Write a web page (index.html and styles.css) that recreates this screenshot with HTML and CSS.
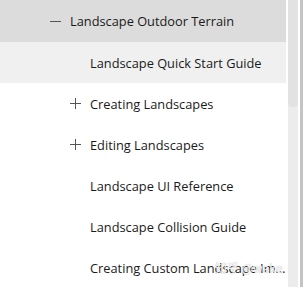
FILE: index.html
```html
<!DOCTYPE html>
<html>
<head>
<meta charset="utf-8">
<link rel="stylesheet" href="styles.css">
</head>
<body>
<div class="frame">
  <ul class="nav">
    <li class="row active lvl1"><span class="icon minus"></span><span class="label">Landscape Outdoor Terrain</span></li>
    <li class="row current lvl2"><span class="label">Landscape Quick Start Guide</span></li>
    <li class="row lvl2"><span class="icon plus"></span><span class="label">Creating Landscapes</span></li>
    <li class="row lvl2"><span class="icon plus"></span><span class="label">Editing Landscapes</span></li>
    <li class="row lvl2"><span class="label">Landscape UI Reference</span></li>
    <li class="row lvl2"><span class="label">Landscape Collision Guide</span></li>
    <li class="row lvl2"><span class="label">Creating Custom Landscape Import and Export Plugins</span></li>
  </ul>
  <div class="scroll"><div class="thumb"></div></div>
  <div class="edge"></div>
  <div class="watermark">知乎 @wake</div>
</div>
</body>
</html>
```
FILE: styles.css
```css
html, body {
  margin: 0;
  padding: 0;
  background: #fff;
}
.frame {
  position: relative;
  display: flex;
  width: 305px;
  height: 287px;
  overflow: hidden;
  font-family: "Open Sans", "Noto Sans CJK SC", sans-serif;
  font-size: 12.8px;
  color: #1a1a1a;
}
.nav {
  list-style: none;
  margin: 0;
  padding: 0;
  width: 286px;
  flex: none;
}
.row {
  height: 41px;
  display: flex;
  align-items: center;
  white-space: nowrap;
}
.row.active { background: #dcdcdc; height: 42px; }
.row.current { background: #f0f0f0; }
.lvl1 { padding-left: 50px; }
.lvl2 { padding-left: 70px; }
.row .label {
  overflow: hidden;
  text-overflow: ellipsis;
  max-width: 196px;
}
.lvl2 .label { margin-left: 20px; }
.lvl2 .icon + .label { margin-left: 9px; }
.icon {
  position: relative;
  width: 11px;
  height: 11px;
  flex: none;
}
.lvl1 .icon + .label { margin-left: 9px; }
.icon::before, .plus::after {
  content: "";
  position: absolute;
  background: #555;
}
.icon::before { left: 0; right: 0; top: 5px; height: 1px; }
.plus::after { top: 0; bottom: 0; left: 5px; width: 1px; }
.scroll {
  width: 10px;
  margin-left: 2px;
  background: #ececec;
  flex: none;
}
.thumb {
  height: 107px;
  background: #e2e2e2;
  border-radius: 0 0 4px 4px;
}
.edge {
  width: 3px;
  margin-left: 2px;
  background: #c4c4c4;
  flex: none;
}
.watermark {
  position: absolute;
  left: 215px;
  top: 259px;
  font-size: 12px;
  color: rgba(255,255,255,0.85);
  text-shadow: 0 0 1px #aaa;
  font-family: "Noto Sans CJK SC", "Open Sans", sans-serif;
}
```
